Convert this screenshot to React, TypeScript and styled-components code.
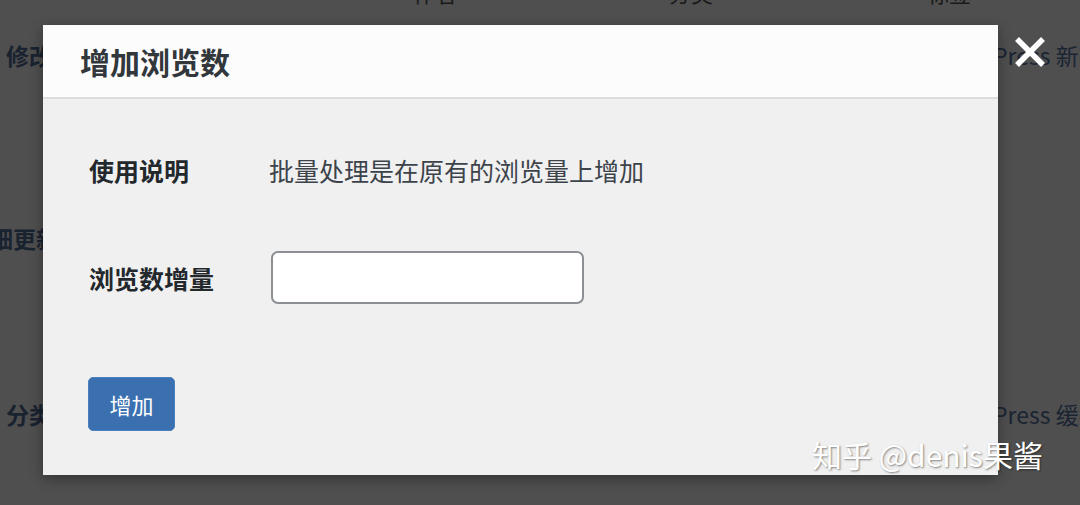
import React from "react";
import styled, { createGlobalStyle } from "styled-components";

const GlobalStyle = createGlobalStyle`
  html, body {
    margin: 0;
    padding: 0;
    width: 1080px;
    height: 505px;
    overflow: hidden;
    background: #4f4f4f;
    font-family: "Noto Sans CJK SC", "Noto Sans", sans-serif;
  }
`;

const Page = styled.div`
  width: 1080px;
  height: 505px;
  position: relative;
  overflow: hidden;
`;

// the admin list that sits dimmed behind the dialog
const BackList = styled.div`
  display: flex;
  flex-direction: column;
`;

const HeadRow = styled.div`
  display: flex;
  height: 22px;
  margin-top: -19px;
  font-size: 22px;
  line-height: 22px;
  color: #1a1a1a;
`;

const HeadCell = styled.div<{ $w: number }>`
  width: ${({ $w }) => $w}px;
  flex-shrink: 0;
`;

const ListRow = styled.div<{ $top: number }>`
  display: grid;
  grid-template-columns: 936px 400px;
  margin-top: ${({ $top }) => $top}px;
  font-size: 23px;
  line-height: 30px;
  white-space: nowrap;
`;

const LeftCell = styled.div<{ $shift: number }>`
  margin-left: ${({ $shift }) => $shift}px;
  color: #19222f;
  font-weight: 600;
`;

const RightCell = styled.div`
  color: #1b2433;
`;

const Dialog = styled.div`
  position: absolute;
  left: 43px;
  top: 25px;
  width: 955px;
  height: 450px;
  background: #f0f0f0;
  box-shadow: 0 4px 12px rgba(0, 0, 0, 0.35);
  display: flex;
  flex-direction: column;
`;

const Header = styled.div`
  height: 72px;
  background: #fcfcfc;
  border-bottom: 2px solid #dddddd;
  display: flex;
  align-items: center;
  padding-left: 37px;
`;

const Title = styled.h1`
  margin: 0;
  font-size: 30px;
  font-weight: 700;
  color: #32373c;
`;

const Body = styled.div`
  display: flex;
  flex-direction: column;
  padding: 56px 46px 0;
`;

const FieldRow = styled.div<{ $top: number }>`
  display: flex;
  align-items: center;
  margin-top: ${({ $top }) => $top}px;
`;

const Label = styled.div`
  width: 180px;
  flex-shrink: 0;
  font-size: 25px;
  font-weight: 700;
  line-height: 30px;
  color: #23282d;
`;

const Value = styled.div`
  font-size: 25px;
  line-height: 30px;
  color: #3c434a;
`;

const Input = styled.input`
  box-sizing: border-box;
  width: 313px;
  height: 53px;
  margin-left: 2px;
  border: 2px solid #8c8f94;
  border-radius: 7px;
  background: #ffffff;
  outline: none;
`;

const Button = styled.button`
  margin-top: 73px;
  align-self: flex-start;
  margin-left: -1px;
  width: 87px;
  height: 54px;
  border: 1px solid #4a7fbd;
  border-radius: 5px;
  background: #3a70b0;
  color: #ffffff;
  font-family: inherit;
  font-size: 22px;
  padding: 0;
`;

const Close = styled.button`
  position: absolute;
  left: 1014px;
  top: 36px;
  width: 32px;
  height: 32px;
  padding: 0;
  border: none;
  background: transparent;
  display: flex;
  align-items: center;
  justify-content: center;
`;

const Watermark = styled.div`
  position: absolute;
  left: 812px;
  top: 436px;
  font-size: 30px;
  line-height: 36px;
  color: #ffffff;
  white-space: nowrap;
  text-shadow: 1px 1px 2px rgba(0, 0, 0, 0.45);
`;

const App = () => {
  return (
    <>
      <GlobalStyle />
      <Page>
        <BackList>
          <HeadRow>
            <HeadCell $w={413} />
            <HeadCell $w={256}>作者</HeadCell>
            <HeadCell $w={258}>分类</HeadCell>
            <HeadCell $w={100}>标签</HeadCell>
          </HeadRow>
          <ListRow $top={37}>
            <LeftCell $shift={-6}>| 修改</LeftCell>
            <RightCell>WordPress 新功能</RightCell>
          </ListRow>
          <ListRow $top={153}>
            <LeftCell $shift={-10}>细更新</LeftCell>
          </ListRow>
          <ListRow $top={146}>
            <LeftCell $shift={-6}>| 分类</LeftCell>
            <RightCell>WordPress 缓存插件</RightCell>
          </ListRow>
        </BackList>

        <Dialog>
          <Header>
            <Title>增加浏览数</Title>
          </Header>
          <Body>
            <FieldRow $top={0}>
              <Label>使用说明</Label>
              <Value>批量处理是在原有的浏览量上增加</Value>
            </FieldRow>
            <FieldRow $top={66}>
              <Label>浏览数增量</Label>
              <Input type="text" />
            </FieldRow>
            <Button>增加</Button>
          </Body>
        </Dialog>

        <Close aria-label="关闭">
          <svg width="32" height="32" viewBox="0 0 32 32">
            <path
              d="M3 3 L29 29 M29 3 L3 29"
              stroke="#ffffff"
              strokeWidth="5.5"
              strokeLinecap="butt"
            />
          </svg>
        </Close>

        <Watermark>知乎 @denis果酱</Watermark>
      </Page>
    </>
  );
};

export default App;
